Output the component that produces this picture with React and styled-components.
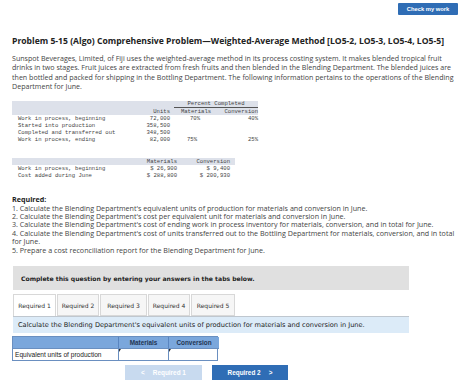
import styled, { createGlobalStyle } from "styled-components";

const Global = createGlobalStyle`
  body {
    margin: 0;
    background: #ffffff;
    font-family: "Open Sans", "Liberation Sans", sans-serif;
    color: #333;
  }
`;

const Page = styled.div`
  width: 474px;
  padding: 3px 0 0 12px;
  box-sizing: border-box;
`;

const TopBar = styled.div`
  display: flex;
  justify-content: flex-end;
  padding-right: 16px;
`;

const CheckButton = styled.button`
  width: 60px;
  height: 12px;
  border: none;
  border-radius: 1px;
  background: #2f6db5;
  color: #fff;
  font-family: "Liberation Sans", Arial, sans-serif;
  font-weight: 700;
  font-size: 5.8px;
  padding: 0;
`;

const Title = styled.h1`
  margin: 20px 0 0;
  font-size: 8.6px;
  line-height: 12px;
  font-weight: 700;
  color: #222;
  white-space: nowrap;
`;

const Para = styled.p`
  margin: 7px 0 0;
  width: 442px;
  font-size: 7.1px;
  line-height: 9.3px;
  color: #444;
`;

const Mono = styled.div`
  font-family: "Liberation Mono", "DejaVu Sans Mono", monospace;
  font-size: 5.6px;
  color: #444;
  margin-top: ${(p) => p.$top}px;
  width: ${(p) => p.$width}px;
`;

const Row = styled.div`
  display: grid;
  grid-template-columns: ${(p) => p.$cols};
  height: 7px;
  line-height: 7px;
  padding: 0 ${(p) => p.$pr || 0}px 0 6px;
  background: ${(p) => (p.$band ? "#dde1ea" : "transparent")};
  white-space: pre;
`;

const Cell = styled.span`
  text-align: ${(p) => p.$align || "left"};
  grid-column: ${(p) => p.$span || "auto"};
  padding-left: ${(p) => p.$pl || 0}px;
  ${(p) => p.$under && "border-bottom: 1px solid #555; line-height: 6px; margin-left: 4px;"}
`;

const Required = styled.div`
  margin-top: 16px;
  width: 448px;
  font-size: 7.15px;
  line-height: 8.4px;
  color: #444;
`;

const ReqHead = styled.div`
  font-weight: 700;
  color: #222;
`;

const Tabs = styled.div`
  width: 396px;
  margin-top: 12px;
  margin-left: 1px;
  font-family: "DejaVu Sans", Verdana, sans-serif;
`;

const Notice = styled.div`
  height: 24px;
  background: #e0e0e0;
  display: flex;
  align-items: center;
  padding-left: 8px;
  font-size: 6.1px;
  font-weight: 700;
  color: #222;
`;

const TabRow = styled.div`
  display: flex;
  margin-top: 4px;
  height: 22px;
`;

const Tab = styled.div`
  width: ${(p) => p.$w}px;
  box-sizing: border-box;
  display: flex;
  align-items: center;
  justify-content: center;
  font-size: 6px;
  color: #333;
  border: 1px solid #d8d8d8;
  border-bottom: ${(p) => (p.$active ? "none" : "1px solid #d8d8d8")};
  background: ${(p) => (p.$active ? "#fff" : "#f6f6f6")};
  margin-right: 1px;
`;

const Instruction = styled.div`
  height: 17px;
  background: #dcebf8;
  border-top: 1px solid #bfc7cf;
  box-sizing: border-box;
  display: flex;
  align-items: center;
  padding-left: 5px;
  font-size: 6.6px;
  color: #222;
  white-space: nowrap;
`;

const AnswerTable = styled.div`
  margin-top: 3px;
  margin-left: -1px;
  display: grid;
  grid-template-columns: 106px 50px 50px;
  width: 206px;
  border: 1px solid #6a8fc0;
  box-sizing: border-box;
  font-family: "Liberation Sans", Arial, sans-serif;
`;

const HeadCell = styled.div`
  height: 11px;
  background: #7ba7dc;
  border-right: ${(p) => (p.$last ? "none" : "1px solid #5a85c0")};
  font-size: 6.4px;
  font-weight: 700;
  color: #1f3553;
  display: flex;
  align-items: center;
  justify-content: center;
`;

const BodyCell = styled.div`
  height: 11px;
  border-top: 1px solid #6a8fc0;
  border-right: ${(p) => (p.$last ? "none" : "1px solid #6a8fc0")};
  font-size: 6.6px;
  color: #222;
  display: flex;
  align-items: center;
  padding-left: 2px;
  position: relative;
`;

const Tick = styled.span`
  position: absolute;
  left: 0;
  top: 0;
  width: 0;
  height: 0;
  border-top: 3px solid #333;
  border-right: 2px solid transparent;
`;

const NavRow = styled.div`
  display: flex;
  gap: 10px;
  margin-top: 4px;
  margin-left: 112px;
`;

const NavButton = styled.div`
  width: ${(p) => p.$w}px;
  height: 15px;
  background: ${(p) => (p.$disabled ? "#c8daef" : "#2f6db5")};
  color: #fff;
  font-family: "Liberation Sans", Arial, sans-serif;
  font-size: 6.4px;
  font-weight: 700;
  display: flex;
  align-items: center;
  justify-content: center;
  gap: 8px;
`;

const t1cols = "120px 32px 44px 44px";
const t2cols = "122px 37px 53px";

export default function App() {
  return (
    <Page>
      <Global />
      <TopBar>
        <CheckButton>Check my work</CheckButton>
      </TopBar>
      <Title>
        Problem 5-15 (Algo) Comprehensive Problem—Weighted-Average Method [LO5-2, LO5-3, LO5-4, LO5-5]
      </Title>
      <Para>
        Sunspot Beverages, Limited, of Fiji uses the weighted-average method in its process costing system. It makes blended tropical fruit
        drinks in two stages. Fruit juices are extracted from fresh fruits and then blended in the Blending Department. The blended juices are
        then bottled and packed for shipping in the Bottling Department. The following information pertains to the operations of the Blending
        Department for June.
      </Para>

      <Mono $top={10} $width={246}>
        <Row $cols={t1cols} $band>
          <Cell />
          <Cell />
          <Cell $span="3 / 5" $align="center" $under>
            Percent Completed
          </Cell>
        </Row>
        <Row $cols={t1cols} $band>
          <Cell />
          <Cell $align="right">Units</Cell>
          <Cell $align="center" $pl={8}>Materials</Cell>
          <Cell $align="right">Conversion</Cell>
        </Row>
        <Row $cols={t1cols}>
          <Cell>Work in process, beginning</Cell>
          <Cell $align="right">72,000</Cell>
          <Cell $align="center" $pl={6}>70%</Cell>
          <Cell $align="right">40%</Cell>
        </Row>
        <Row $cols={t1cols}>
          <Cell>Started into production</Cell>
          <Cell $align="right">358,500</Cell>
          <Cell />
          <Cell />
        </Row>
        <Row $cols={t1cols}>
          <Cell>Completed and transferred out</Cell>
          <Cell $align="right">348,500</Cell>
          <Cell />
          <Cell />
        </Row>
        <Row $cols={t1cols}>
          <Cell>Work in process, ending</Cell>
          <Cell $align="right">82,000</Cell>
          <Cell $align="center">75%</Cell>
          <Cell $align="right">25%</Cell>
        </Row>
      </Mono>

      <Mono $top={15} $width={223}>
        <Row $cols={t2cols} $band $pr={5}>
          <Cell />
          <Cell $align="right">Materials</Cell>
          <Cell $align="right">Conversion</Cell>
        </Row>
        <Row $cols={t2cols} $pr={5}>
          <Cell>Work in process, beginning</Cell>
          <Cell $align="right">$ 26,900</Cell>
          <Cell $align="right">$ 9,400</Cell>
        </Row>
        <Row $cols={t2cols} $pr={5}>
          <Cell>Cost added during June</Cell>
          <Cell $align="right">$ 288,800</Cell>
          <Cell $align="right">$ 200,930</Cell>
        </Row>
      </Mono>

      <Required>
        <ReqHead>Required:</ReqHead>
        <div>1. Calculate the Blending Department's equivalent units of production for materials and conversion in June.</div>
        <div>2. Calculate the Blending Department's cost per equivalent unit for materials and conversion in June.</div>
        <div>3. Calculate the Blending Department's cost of ending work in process inventory for materials, conversion, and in total for June.</div>
        <div>
          4. Calculate the Blending Department's cost of units transferred out to the Bottling Department for materials, conversion, and in total
          for June.
        </div>
        <div>5. Prepare a cost reconciliation report for the Blending Department for June.</div>
      </Required>

      <Tabs>
        <Notice>Complete this question by entering your answers in the tabs below.</Notice>
        <TabRow>
          <Tab $w={43} $active>Required 1</Tab>
          <Tab $w={42}>Required 2</Tab>
          <Tab $w={47}>Required 3</Tab>
          <Tab $w={42}>Required 4</Tab>
          <Tab $w={44}>Required 5</Tab>
        </TabRow>
        <Instruction>
          Calculate the Blending Department's equivalent units of production for materials and conversion in June.
        </Instruction>
        <AnswerTable>
          <HeadCell />
          <HeadCell>Materials</HeadCell>
          <HeadCell $last>Conversion</HeadCell>
          <BodyCell>Equivalent units of production</BodyCell>
          <BodyCell>
            <Tick />
          </BodyCell>
          <BodyCell $last>
            <Tick />
          </BodyCell>
        </AnswerTable>
        <NavRow>
          <NavButton $w={77} $disabled>
            <span>&lt;</span>
            <span>Required 1</span>
          </NavButton>
          <NavButton $w={76}>
            <span>Required 2</span>
            <span>&gt;</span>
          </NavButton>
        </NavRow>
      </Tabs>
    </Page>
  );
}
